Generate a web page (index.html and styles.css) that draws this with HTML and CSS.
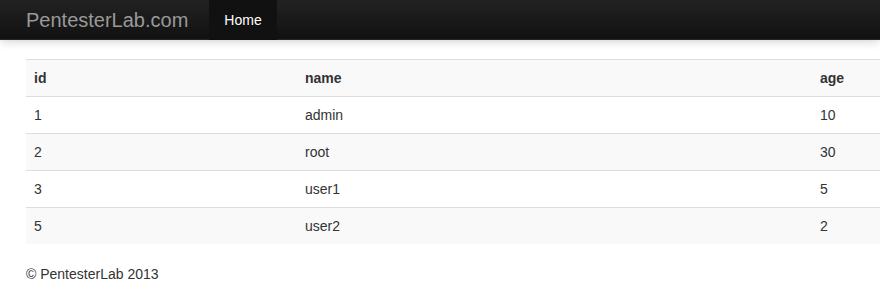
FILE: index.html
```html
<!DOCTYPE html>
<html>
<head>
<meta charset="utf-8">
<title>PentesterLab</title>
<link rel="stylesheet" href="styles.css">
</head>
<body>
<div class="navbar">
  <div class="navbar-inner">
    <div class="container nav-row">
      <a class="brand" href="#">PentesterLab.com</a>
      <ul class="nav">
        <li class="active"><a href="#">Home</a></li>
      </ul>
    </div>
  </div>
</div>
<div class="container main">
  <table class="table">
    <tbody>
      <tr><th class="c1">id</th><th class="c2">name</th><th class="c3">age</th></tr>
      <tr><td>1</td><td>admin</td><td>10</td></tr>
      <tr><td>2</td><td>root</td><td>30</td></tr>
      <tr><td>3</td><td>user1</td><td>5</td></tr>
      <tr><td>5</td><td>user2</td><td>2</td></tr>
    </tbody>
  </table>
  <footer class="footer">&copy; PentesterLab 2013</footer>
</div>
</body>
</html>
```
FILE: styles.css
```css
html, body { margin: 0; padding: 0; }
body {
  font-family: "Liberation Sans", Arial, sans-serif;
  font-size: 14px;
  line-height: 20px;
  color: #333;
  background: #fff;
  overflow: hidden;
}
.navbar {
  height: 40px;
  position: relative;
  z-index: 2;
  box-shadow: 0 1px 10px rgba(0,0,0,0.1);
}
.navbar-inner {
  height: 40px;
  background: linear-gradient(to bottom, #222222, #111111);
  box-sizing: border-box;
  border-bottom: 1px solid #252525;
  box-shadow: 0 1px 10px rgba(0,0,0,0.1);
}
.container {
  margin-left: 26px;
}
.nav-row { display: flex; align-items: stretch; height: 40px; }
.brand {
  display: block;
  padding: 10px 21px 10px 0;
  font-size: 20px;
  font-weight: 200;
  line-height: 20px;
  color: #999;
  text-decoration: none;
}
.nav { list-style: none; margin: 0; padding: 0; display: flex; }
.nav li a {
  display: block;
  padding: 10px 15px 10px;
  color: #999;
  text-decoration: none;
  line-height: 20px;
}
.nav li.active a {
  color: #fff;
  background-color: #111;
  height: 20px;
}
.main { padding-top: 19px; }
.table {
  width: 100%;
  border-collapse: collapse;
  border-spacing: 0;
  margin-bottom: 20px;
}
.table th, .table td {
  padding: 8px;
  line-height: 20px;
  text-align: left;
  vertical-align: top;
  border-top: 1px solid #dddddd;
}
.table th { font-weight: bold; }
.table tbody tr:nth-child(odd) > td,
.table tbody tr:nth-child(odd) > th { background-color: #f9f9f9; }
.c1 { width: 255px; }
.c2 { width: 499px; }
.footer { line-height: 20px; }
```
